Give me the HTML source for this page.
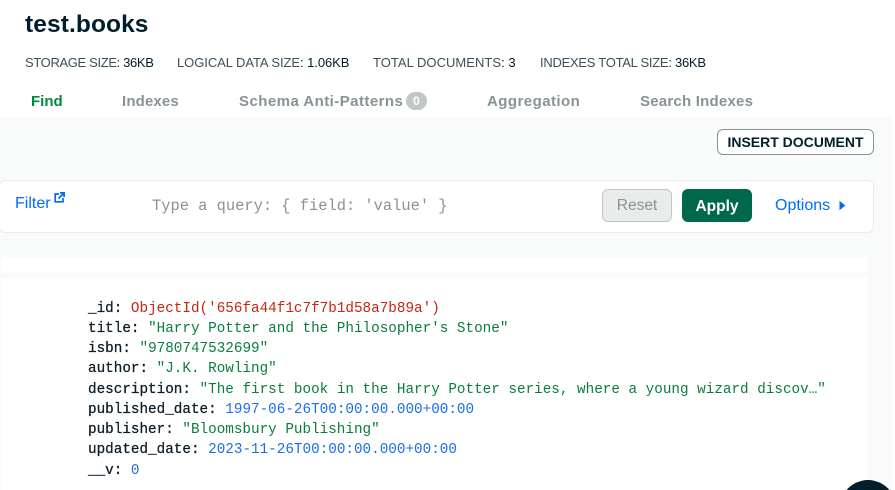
<!DOCTYPE html>
<html><head><meta charset="utf-8"><style>
html,body{margin:0;padding:0;background:#fff;width:895px;height:490px;overflow:hidden}
#w{width:895px;height:490px;position:relative;overflow:hidden;font-family:"Liberation Sans",sans-serif}
.a{position:absolute;white-space:nowrap}
.s{font-size:13px;color:#3d4f58;top:55px;line-height:16px}
.s b{font-weight:400;color:#001e2b}
.t{font-size:15px;font-weight:700;color:#889397;top:93px;line-height:18px}
.m{font-family:"Liberation Mono",monospace;font-size:14.3px;line-height:20.25px;white-space:pre;color:#0c1c26;left:88px;top:298.6px}
.k{-webkit-text-stroke:.25px #0c1c26}
.m span{-webkit-text-stroke:0}
.r{color:#c7260f}.g{color:#0a7d3e}.b{color:#1a6fe8}
</style></head><body><div id="w">
<div class="a" style="left:0;top:117px;width:892px;height:373px;background:#f9fbfa"></div>
<div class="a" style="left:25px;top:11px;font-size:24.5px;font-weight:700;color:#001e2b;line-height:28px;letter-spacing:.1px">test.books</div>
<div class="a s" style="left:25px;letter-spacing:-.35px">STORAGE SIZE<b>: 36KB</b></div>
<div class="a s" style="left:177px;letter-spacing:-.06px">LOGICAL DATA SIZE<b>: 1.06KB</b></div>
<div class="a s" style="left:373px;letter-spacing:.03px">TOTAL DOCUMENTS<b>: 3</b></div>
<div class="a s" style="left:540px;letter-spacing:-.27px">INDEXES TOTAL SIZE<b>: 36KB</b></div>
<div class="a t" style="left:31px;color:#00883a">Find</div>
<div class="a t" style="left:122px;letter-spacing:.15px">Indexes</div>
<div class="a t" style="left:239px;letter-spacing:.45px">Schema Anti-Patterns</div>
<div class="a" style="left:406px;top:92px;width:21px;height:18px;border-radius:9px;background:#c1c7c6;color:#fff;font-size:12px;font-weight:700;line-height:18px;text-align:center">0</div>
<div class="a t" style="left:487px;letter-spacing:.45px">Aggregation</div>
<div class="a t" style="left:640px;letter-spacing:.22px">Search Indexes</div>
<div class="a" style="left:717px;top:129px;width:155px;height:24px;border:1px solid #889397;border-radius:6px;background:#fff;color:#001e2b;font-size:14px;font-weight:700;line-height:24px;text-align:center">INSERT DOCUMENT</div>
<div class="a" style="left:-1px;top:180px;width:873px;height:51px;background:#fff;border:1px solid #e8edeb;border-radius:6px"></div>
<div class="a" style="left:15px;top:195px;font-size:16px;color:#016bf8;line-height:18px">Filter</div>
<svg class="a" style="left:54px;top:192px" width="11" height="11" viewBox="0 0 11 11"><path d="M5 2H1.2V9.8H9V6" fill="none" stroke="#016bf8" stroke-width="1.7"/><path d="M4.5 6.5L9 2M6 .9H10.1V5" fill="none" stroke="#016bf8" stroke-width="1.8"/></svg>
<div class="a" style="left:152px;top:197px;font-family:'Liberation Mono',monospace;font-size:15.4px;line-height:18px;color:#889397;white-space:pre">Type a query: { field: 'value' }</div>
<div class="a" style="left:602px;top:189px;width:68px;height:31px;border:1px solid #c1c7c6;border-radius:6px;background:#e8edeb;color:#889397;font-size:15.5px;line-height:32px;text-align:center">Reset</div>
<div class="a" style="left:682px;top:189px;width:70px;height:33px;border-radius:6px;background:#00684a;color:#fff;font-size:15.5px;font-weight:700;line-height:35px;text-align:center">Apply</div>
<div class="a" style="left:775px;top:197px;font-size:16px;color:#016bf8;line-height:18px">Options</div>
<svg class="a" style="left:839px;top:200px" width="7" height="11" viewBox="0 0 7 11"><path d="M.5 .8L6.3 5.5L.5 10.2Z" fill="#016bf8"/></svg>
<div class="a" style="left:1px;top:257px;width:867px;height:15px;background:#fff"></div>
<div class="a" style="left:1px;top:278px;width:867px;height:212px;background:#fff"></div>
<div class="a m k">_id: <span class="r">ObjectId('656fa44f1c7f7b1d58a7b89a')</span>
title: <span class="g">"Harry Potter and the Philosopher's Stone"</span>
isbn: <span class="g">"9780747532699"</span>
author: <span class="g">"J.K. Rowling"</span>
description: <span class="g">"The first book in the Harry Potter series, where a young wizard discov…"</span>
published_date: <span class="b">1997-06-26T00:00:00.000+00:00</span>
publisher: <span class="g">"Bloomsbury Publishing"</span>
updated_date: <span class="b">2023-11-26T00:00:00.000+00:00</span>
__v: <span class="b">0</span></div>
<svg class="a" style="left:840px;top:480px" width="55" height="10" viewBox="0 0 55 10"><path d="M6.6 10A28 28 0 0 1 49.4 10Z" fill="#001e2b"/></svg>
</div></body></html>
